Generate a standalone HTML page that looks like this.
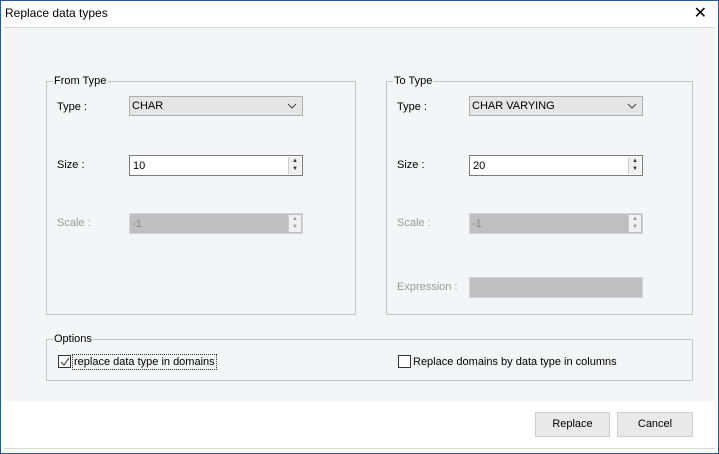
<!DOCTYPE html><html><head><style>
*{box-sizing:border-box;margin:0;padding:0}
body{width:719px;height:454px;position:relative;background:#fff;font-family:"Liberation Sans",sans-serif;font-size:11px;color:#000;overflow:hidden}
.a{position:absolute}
.win{left:0;top:0;width:719px;height:454px;border:1px solid #2b5797}
.title{left:5px;top:6px;font-size:12px}
.grey{left:4px;top:27px;width:711px;height:374px;background:#f4f5f7;border-top:1px solid #d8d8d8}
.grp{border:1px solid #c5c5c5}
.leg{background:#f4f5f7;padding:0 1px;font-size:11px}
.combo{background:#e5e5e5;border:1px solid #adadad;padding:4px 2px;line-height:11px}
.spin{background:#fff;border:1px solid #7a7a7a;padding:4px 3px;line-height:12px}
.dis{background:#bfbfbf;border:1px solid #d5d5d5;color:#8a8a8a;padding:4px 2px;line-height:12px}
.lbl{font-size:11px}
.d{color:#9a9a9a}
.btn{background:#e9e9e9;border:1px solid #cfcfcf;text-align:center;line-height:23px;font-size:11px}
.cb{width:13px;height:13px;border:1px solid #333;background:#fff}
.arr{right:1px;top:1px;width:13px;height:17px;border-left:1px solid #ccc;background:#f0f0f0;font-size:6px;line-height:8px;text-align:center;color:#333}
</style></head><body>
<div class="a win"></div>
<div class="a title">Replace data types</div>
<div class="a" style="right:12px;top:3px;font-size:16px">✕</div>
<div class="a grey"></div>

<div class="a grp" style="left:46px;top:81px;width:310px;height:234px"></div>
<div class="a leg" style="left:53px;top:75px">From Type</div>
<div class="a lbl" style="left:57px;top:101px">Type :</div>
<div class="a combo" style="left:129px;top:96px;width:174px;height:20px">CHAR<svg class="a" style="right:5px;top:6px" width="10" height="6"><path d="M1 1L5 5L9 1" stroke="#444" fill="none"/></svg></div>
<div class="a lbl" style="left:57px;top:159px">Size :</div>
<div class="a spin" style="left:129px;top:155px;width:174px;height:21px">10<div class="a arr">▲<br>▼</div></div>
<div class="a lbl d" style="left:57px;top:217px">Scale :</div>
<div class="a dis" style="left:129px;top:213px;width:174px;height:21px">-1<div class="a arr" style="color:#999">▲<br>▼</div></div>

<div class="a grp" style="left:386px;top:81px;width:307px;height:234px"></div>
<div class="a leg" style="left:393px;top:75px">To Type</div>
<div class="a lbl" style="left:397px;top:101px">Type :</div>
<div class="a combo" style="left:469px;top:96px;width:174px;height:20px">CHAR VARYING<svg class="a" style="right:5px;top:6px" width="10" height="6"><path d="M1 1L5 5L9 1" stroke="#444" fill="none"/></svg></div>
<div class="a lbl" style="left:397px;top:159px">Size :</div>
<div class="a spin" style="left:469px;top:155px;width:174px;height:21px">20<div class="a arr">▲<br>▼</div></div>
<div class="a lbl d" style="left:397px;top:217px">Scale :</div>
<div class="a dis" style="left:469px;top:213px;width:174px;height:21px">-1<div class="a arr" style="color:#999">▲<br>▼</div></div>
<div class="a lbl d" style="left:397px;top:281px">Expression :</div>
<div class="a dis" style="left:469px;top:277px;width:174px;height:21px"></div>

<div class="a grp" style="left:46px;top:339px;width:647px;height:42px"></div>
<div class="a leg" style="left:53px;top:333px">Options</div>
<div class="a cb" style="left:58px;top:355px"><svg class="a" style="left:1px;top:1px" width="10" height="10"><path d="M1 5L4 8L9 1" stroke="#555" stroke-width="1.3" fill="none"/></svg></div>
<div class="a" style="left:72px;top:354px;border:1px dotted #333;padding:1px 1px">replace data type in domains</div>
<div class="a cb" style="left:398px;top:355px"></div>
<div class="a" style="left:413px;top:356px">Replace domains by data type in columns</div>

<div class="a btn" style="left:535px;top:412px;width:75px;height:25px">Replace</div>
<div class="a btn" style="left:617px;top:412px;width:76px;height:25px">Cancel</div>
<div class="a" style="left:4px;top:448px;width:711px;height:1px;background:#d8d8d8"></div>
</body></html>
